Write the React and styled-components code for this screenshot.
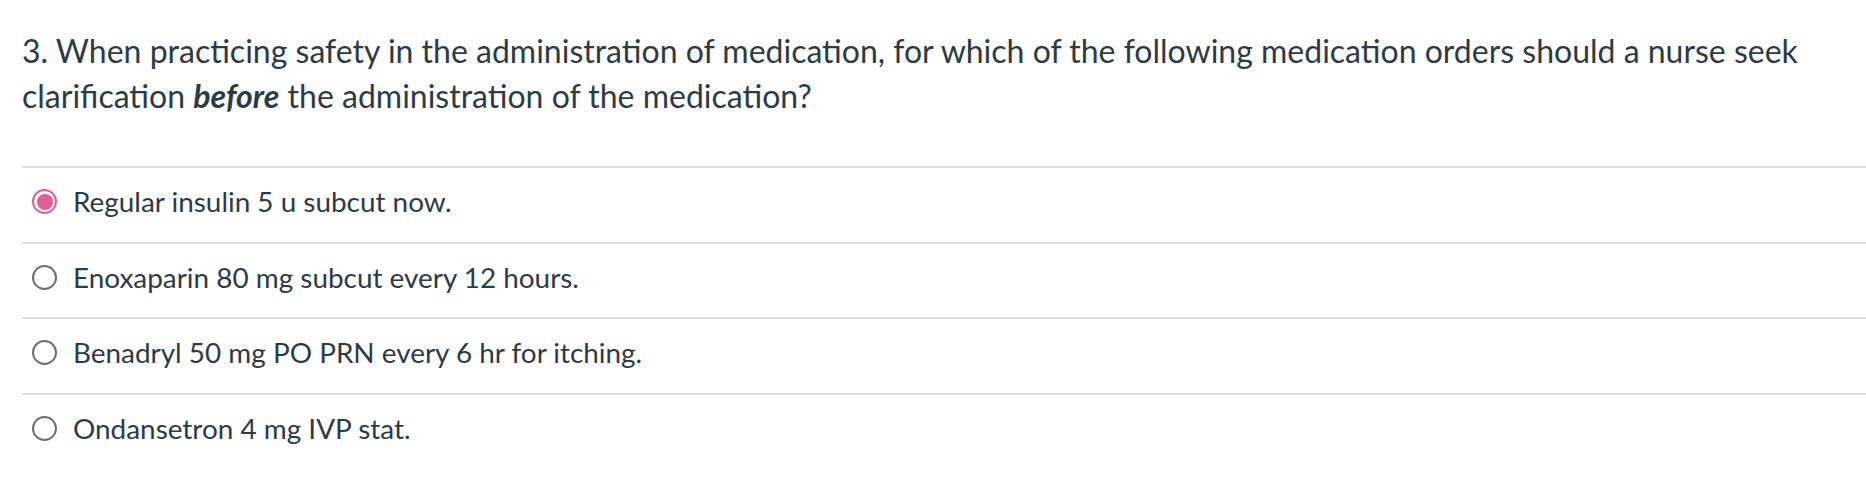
import { useState } from "react";
import styled, { createGlobalStyle } from "styled-components";

const GlobalStyle = createGlobalStyle`
  html, body {
    margin: 0;
    padding: 0;
    background: #ffffff;
  }
  body {
    font-family: Lato, "Noto Sans", sans-serif;
    color: #2d3b45;
  }
`;

const QuestionCard = styled.div`
  padding: 28px 0 0 22px;
`;

const QuestionText = styled.p`
  margin: 0 0 48px;
  font-size: 32px;
  line-height: 45px;

  strong {
    font-weight: 700;
    font-style: italic;
  }
`;

const AnswerList = styled.ul`
  list-style: none;
  margin: 0;
  padding: 0;
`;

const AnswerRow = styled.li`
  box-sizing: border-box;
  display: flex;
  align-items: center;
  gap: 16px;
  height: 75.6px;
  padding: 0 0 6px 10px;
  border-top: 2px solid #dddddd;
  cursor: pointer;
`;

const Radio = styled.span`
  box-sizing: border-box;
  flex: none;
  width: 25px;
  height: 25px;
  border-radius: 50%;
  border: ${(p) => (p.$checked ? "2.5px solid #e45c97" : "2px solid #6e6e6e")};
  padding: 2.5px;
  display: flex;

  &::after {
    content: "";
    flex: 1;
    border-radius: 50%;
    background: ${(p) => (p.$checked ? "#e45c97" : "transparent")};
  }
`;

const AnswerLabel = styled.span`
  font-size: 27.9px;
  line-height: 43px;
`;

const answers = [
  "Regular insulin 5 u subcut now.",
  "Enoxaparin 80 mg subcut every 12 hours.",
  "Benadryl 50 mg PO PRN every 6 hr for itching.",
  "Ondansetron 4 mg IVP stat.",
];

export default function App() {
  const [selected, setSelected] = useState(0);

  return (
    <>
      <GlobalStyle />
      <QuestionCard>
        <QuestionText>
          3. When practicing safety in the administration of medication, for
          which of the following medication orders should a nurse seek
          clarification <strong>before</strong> the administration of the
          medication?
        </QuestionText>
        <AnswerList>
          {answers.map((a, i) => (
            <AnswerRow key={a} onClick={() => setSelected(i)}>
              <Radio $checked={selected === i} />
              <AnswerLabel>{a}</AnswerLabel>
            </AnswerRow>
          ))}
        </AnswerList>
      </QuestionCard>
    </>
  );
}
